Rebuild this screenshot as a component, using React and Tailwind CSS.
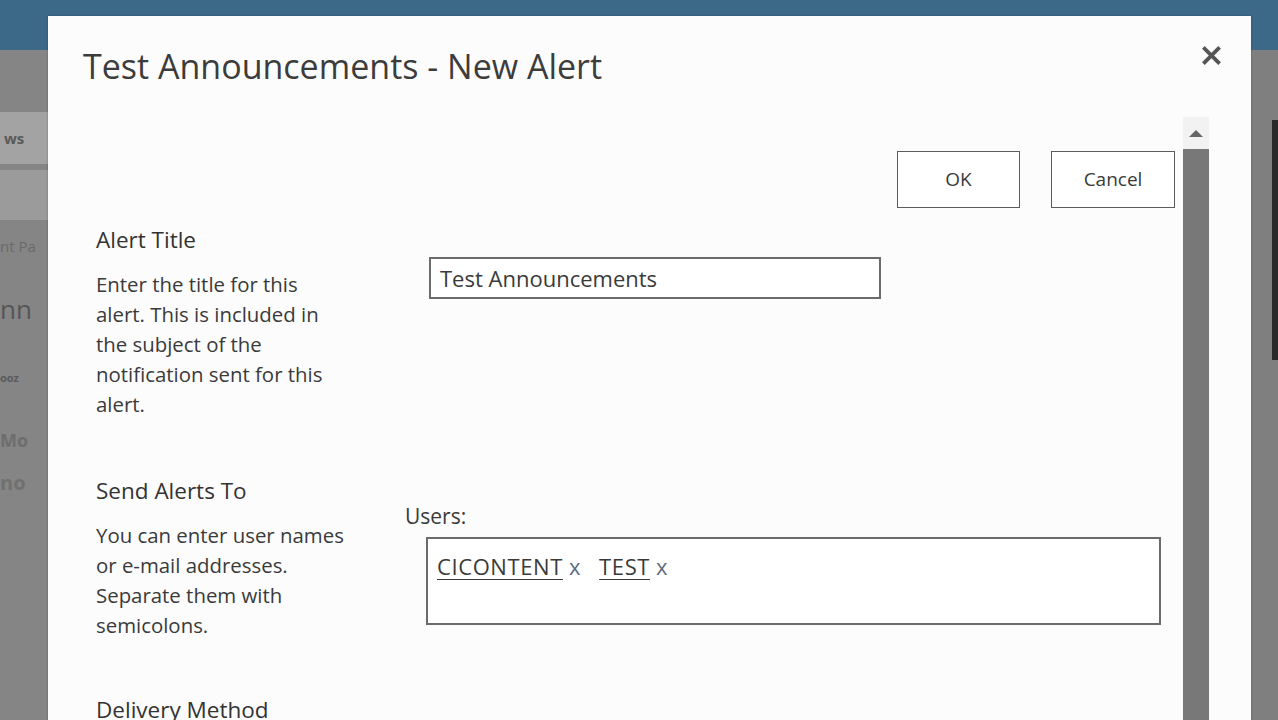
import { X } from 'lucide-react';

const font = { fontFamily: '"Open Sans", "Noto Sans", Arial, sans-serif' };

// faded page behind the modal
const Backdrop = () => (
  <div className="absolute inset-0 flex flex-col bg-[#858585]">
    <div className="h-[50px] bg-[#3d6989]" />
    <div className="flex flex-1">
      <div className="flex w-[48px] flex-col pt-[62px] text-[#5a5a5a]">
        <div className="flex h-[52px] items-center overflow-hidden bg-[#a3a3a3] pl-1 text-[15px] font-bold">ws</div>
        <div className="mt-[6px] h-[50px] bg-[#9b9b9b]" />
        <div className="mt-[6px] flex h-[40px] items-center overflow-hidden whitespace-nowrap text-[15px] text-[#6a6a6a]">nt Pa</div>
        <div className="mt-[30px] h-[34px] overflow-hidden text-[26px] leading-none text-[#555]">nn</div>
        <div className="mt-[40px] text-[11px] font-bold">ooz</div>
        <div className="mt-[40px] text-[18px] font-bold text-[#6d6d6d]">Mo</div>
        <div className="mt-[14px] text-[20px] font-bold text-[#707070]">no</div>
      </div>
      <div className="flex-1" />
      <div className="flex w-[27px]">
        <div className="flex-1 bg-[#7f7f7f]" />
        <div className="flex w-[6px] flex-col bg-[#7f7f7f]">
          <div className="mt-[70px] h-[240px] bg-[#2a2a2a]" />
        </div>
      </div>
    </div>
  </div>
);

const Section = ({ title, lines, children }) => (
  <div className="flex">
    <div className="w-[309px] shrink-0">
      <div className="text-[22.5px] leading-[30px] text-[#333]">{title}</div>
      {lines && (
        <div className="mt-[14px] text-[20.4px] leading-[30px] text-[#3a3a3a]">
          {lines.map((l) => (
            <div key={l}>{l}</div>
          ))}
        </div>
      )}
    </div>
    <div className="flex-1">{children}</div>
  </div>
);

export default function App() {
  return (
    <div className="relative h-[720px] w-[1278px] overflow-hidden" style={font}>
      <Backdrop />

      <div className="absolute left-[48px] top-[16px] flex h-[720px] w-[1203px] flex-col bg-[#fcfcfc] shadow-[0_0_2px_rgba(0,0,0,0.3)]">
        <div className="flex h-[101px] items-start justify-between pl-[35px] pr-[26px]">
          <h1 className="mt-[28px] text-[34px] leading-[44px] text-[#3c3c3c]">
            Test Announcements - New Alert
          </h1>
          <X className="mt-[26px] h-[27px] w-[27px] text-[#555]" strokeWidth={3.4} strokeLinecap="square" />
        </div>

        <div className="flex flex-1">
          <div className="flex-1 pl-[48px] pr-[8px] pt-[34px]">
            <div className="flex justify-end gap-[31px]">
              <button className="h-[57px] w-[123px] border border-[#5c5c5c] bg-white text-[19px] text-[#3a3a3a]">OK</button>
              <button className="h-[57px] w-[124px] border border-[#5c5c5c] bg-white text-[19px] text-[#3a3a3a]">Cancel</button>
            </div>

            <div className="mt-[17px]">
              <Section
                title="Alert Title"
                lines={[
                  'Enter the title for this',
                  'alert. This is included in',
                  'the subject of the',
                  'notification sent for this',
                  'alert.',
                ]}
              >
                <div className="ml-[24px] mt-[32px] flex h-[42px] w-[452px] items-center border-2 border-[#6b6b6b] bg-white pl-[9px] text-[22px] text-[#3a3a3a]">
                  Test Announcements
                </div>
              </Section>
            </div>

            <div className="mt-[57px]">
              <Section
                title="Send Alerts To"
                lines={[
                  'You can enter user names',
                  'or e-mail addresses.',
                  'Separate them with',
                  'semicolons.',
                ]}
              >
                <div className="mt-[25px] text-[21px] leading-[30px] text-[#3a3a3a]">Users:</div>
                <div className="ml-[21px] mt-[6px] h-[88px] w-[735px] border-2 border-[#6b6b6b] bg-white pl-[9px] pt-[12px] text-[22px] leading-[30px] tracking-[0.6px] text-[#3a3a3a]">
                  <span className="underline decoration-1 underline-offset-[4px]">CICONTENT</span>
                  <span className="ml-[6px] text-[#5d6a80]">x</span>
                  <span className="ml-[18px] underline decoration-1 underline-offset-[4px]">TEST</span>
                  <span className="ml-[6px] text-[#5d6a80]">x</span>
                </div>
              </Section>
            </div>

            <div className="mt-[55px]">
              <Section title="Delivery Method" />
            </div>
          </div>

          {/* scrollbar */}
          <div className="flex w-[26px] flex-col">
            <div className="flex h-[32px] items-center justify-center bg-[#f2f2f2]">
              <div className="h-0 w-0 border-x-[7px] border-b-[7px] border-x-transparent border-b-[#666]" />
            </div>
            <div className="flex-1 bg-[#787878]" />
          </div>
          <div className="w-[42px]" />
        </div>
      </div>
    </div>
  );
}
